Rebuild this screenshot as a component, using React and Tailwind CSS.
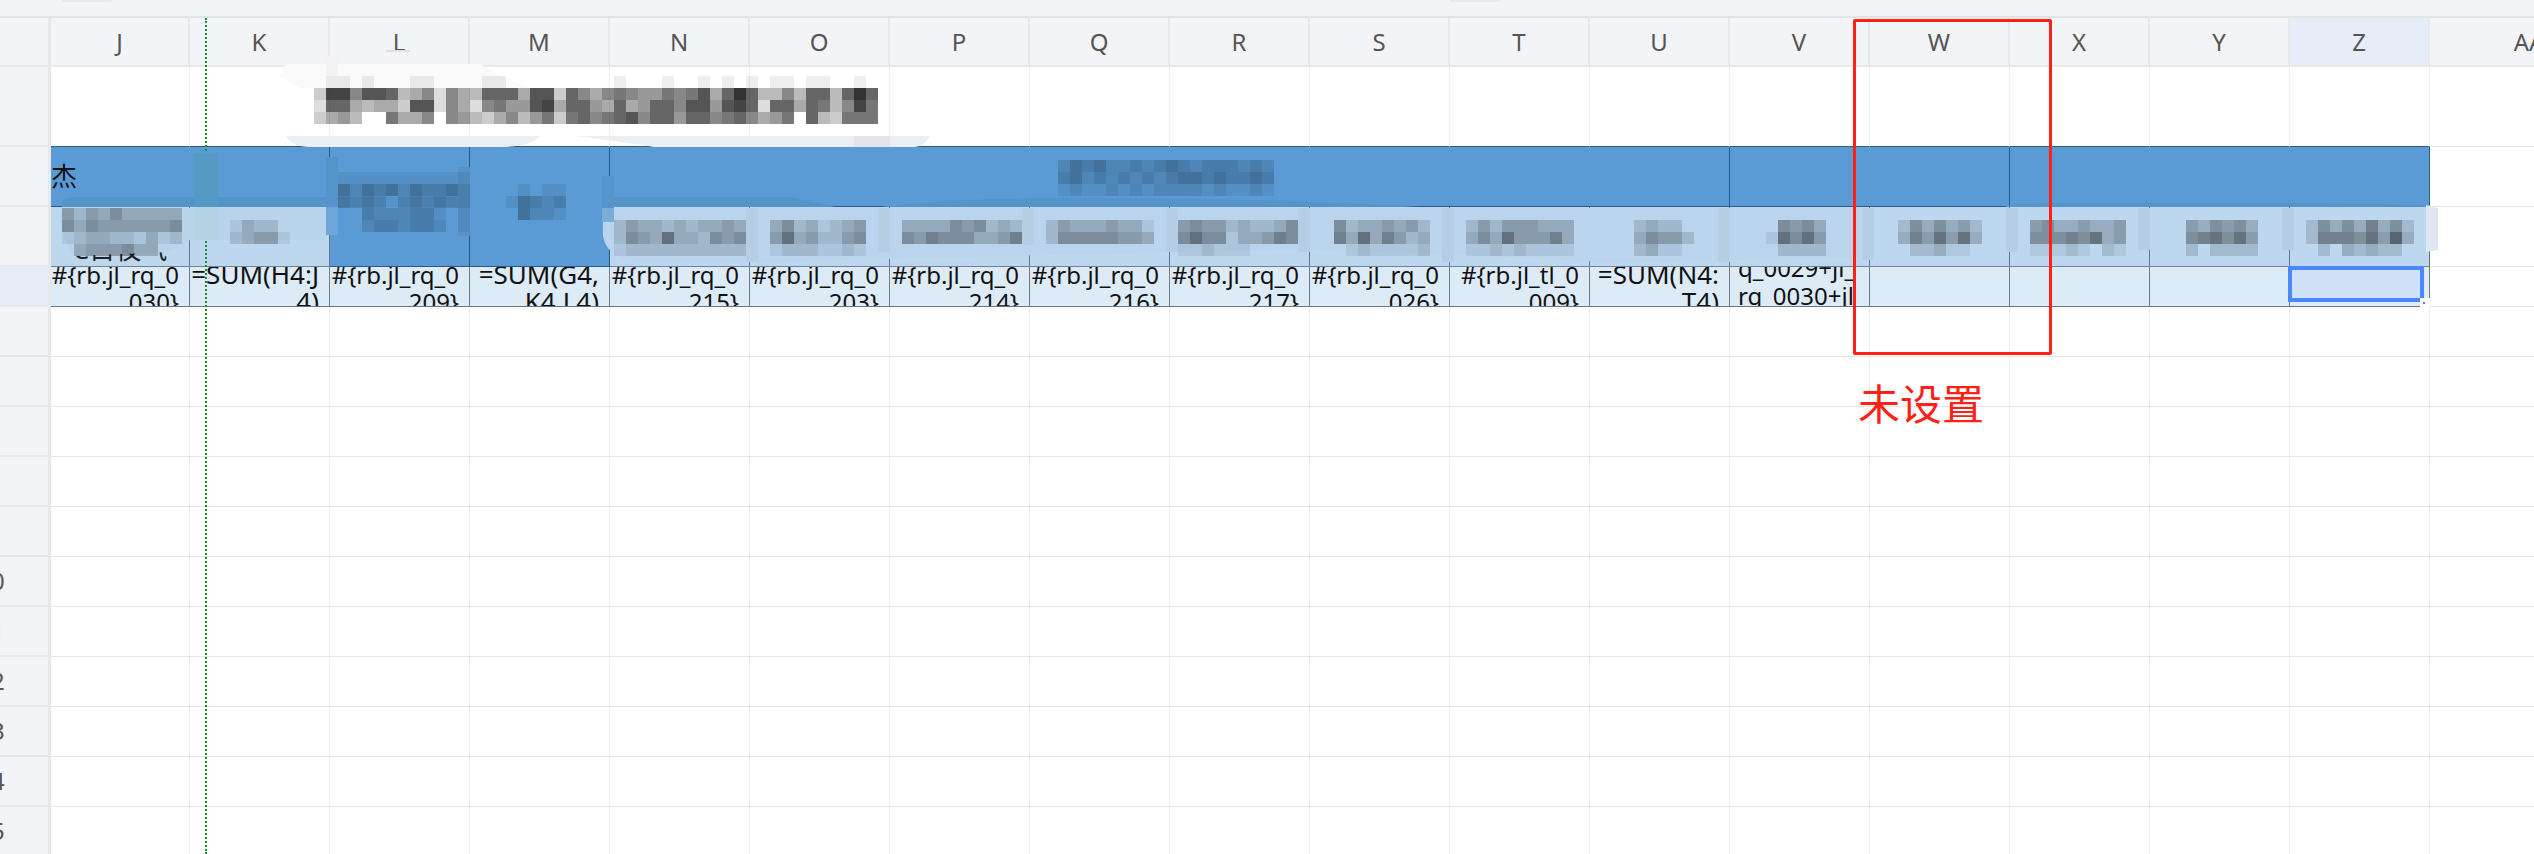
import React from 'react'

const COLS = ['J', 'K', 'L', 'M', 'N', 'O', 'P', 'Q', 'R', 'S', 'T', 'U', 'V', 'W', 'X', 'Y', 'Z']

const DATA = [
  ['#{rb.jl_rq_0', '030}'],
  ['=SUM(H4:J', '4)'],
  ['#{rb.jl_rq_0', '209}'],
  ['=SUM(G4,', 'K4,L4)'],
  ['#{rb.jl_rq_0', '215}'],
  ['#{rb.jl_rq_0', '203}'],
  ['#{rb.jl_rq_0', '214}'],
  ['#{rb.jl_rq_0', '216}'],
  ['#{rb.jl_rq_0', '217}'],
  ['#{rb.jl_rq_0', '026}'],
  ['#{rb.jl_tl_0', '009}'],
  ['=SUM(N4:', 'T4)'],
]

// Pixelated areas of the screenshot: one char per 12px block, f = untouched, 0 = black
const MOSAICS = [
  { x: 314, y: 76, rows: [
    'feefefffeeffffeeffffffff' + 'fefffeffefefefeefeeffef',
    'c448556ba8d8ab666a55c68a' + '878997875a636bb8b66b636',
    'd66abaac55d8ad879954a669' + 'a6a9668559546d66a67b847',
    'ca9bff7aa8f89bca8b97c768' + '7658669668768a97f6bc777',
  ] },
  { x: 1058, y: 160, rows: [
    'dbcbddcdcbcdcccdcd',
    'cbdcdcdcdcbbcbccbc',
    'edeedededdddedeede',
  ] },
  { x: 338, y: 172, rows: ['eeeeeeeeeee', 'bdbcbdbccbd', 'cdcdfdcdcdd', 'ffcdddccefe', 'ffdccdccdfe'] },
  { x: 506, y: 184, rows: ['fefee', 'ebcdc', 'fbdde'] },
  { x: 62, y: 208, rows: ['bdbcaccccc', 'acabbbbbba', 'edccddeced', 'fcbbbaccff'] },
  { x: 230, y: 220, rows: ['ecddf', 'dcbbe'] },
  { x: 614, y: 220, rows: ['dbccdcdccbc', 'dabc8ccdaba', 'edddddddddd'] },
  { x: 770, y: 220, rows: ['cadcedcb', 'b8cbddba', 'edddeede'] },
  { x: 902, y: 220, rows: ['ccccabadcd', 'ab9aaaccb9'] },
  { x: 1046, y: 220, rows: ['dbcccbcce', 'daaaaabbc'] },
  { x: 1178, y: 220, rows: ['babbdcddca', 'a8aaeccb9a', 'eedeeefff'] },
  { x: 1322, y: 220, rows: ['fadccbcbd', 'f9c8c9bdc', 'ffedeeeed'] },
  { x: 1466, y: 220, rows: ['dbdbbbccc', 'cac8bbb9c', 'eededeeee'] },
  { x: 1634, y: 220, rows: ['dcdd', 'cabbd', 'dcee'] },
  { x: 1766, y: 220, rows: ['fabac', 'e8a8b', 'fdddd'] },
  { x: 1898, y: 220, rows: ['dacacbd', 'c9b8b8c', 'fddceef'] },
  { x: 2030, y: 220, rows: ['baccbccb', 'aaa9a8cb', 'eeedefde'] },
  { x: 2186, y: 220, rows: ['bcabac', 'a98a8b', 'dfdddd'] },
  { x: 2306, y: 220, rows: ['dacac9cad', 'd999a8b7c', 'fdfcdcddf'] },
]

// Smudged retouching around the pixelated areas
function Redactions() {
  return (
    <svg className="absolute left-0 top-0 pointer-events-none" width="2534" height="854">
      {/* title smudge */}
      <path d="M278 76 L286 64 H480 L500 76 L530 88 H300 Z" fill="#fafafa" />
      <rect x="326" y="56" width="12" height="20" fill="#f3f3f5" />
      <rect x="386" y="50" width="24" height="2" fill="#e0e0e0" />
      <path d="M286 136 H540 Q530 147 500 147 H310 Q292 147 286 136 Z" fill="#eceff2" />
      <path d="M578 136 H662 L655 147 Z" fill="#eceff2" />
      <path d="M600 136 H930 Q924 147 915 147 H655 Z" fill="#eceff2" />
      <rect x="854" y="136" width="36" height="11" fill="#e2e4e8" />

      {/* darker band under the row 2 header */}
      <path d="M62 207 V202 Q64 197 80 197 H470 V207 Z" fill="#5594ca" />
      <path d="M614 197 H790 L835 207 H614 Z" fill="#5594ca" />
      <path d="M880 207 Q960 196 1150 198 Q1300 200 1420 207 Z" fill="#5594ca" />
      <path d="M2005 207 Q2010 204 2040 203 H2320 L2430 205 V207 Z" fill="#5594ca" />

      {/* light fill over row 3 lines */}
      <path d="M60 220 Q62 208 70 208 H326 V240 H190 L170 252 L75 256 Q62 240 60 220 Z" fill="#b9d3ea" />
      <path d="M606 208 H1860 V258 L1600 262 L1450 254 L1300 250 L1170 252 L760 262 H640 Q606 258 603 236 Q602 216 606 208 Z" fill="#b9d4ec" />
      <path d="M1870 208 H2430 V250 H1870 Z" fill="#bdd7ee" />

      {/* vertical streaks */}
      <rect x="194" y="153" width="24" height="54" fill="#559ac4" />
      <rect x="194" y="207" width="24" height="33" fill="#b3d2e3" />
      <rect x="326" y="157" width="12" height="50" fill="#5594ca" />
      <rect x="326" y="207" width="12" height="28" fill="#6ea6d7" />
      <rect x="458" y="167" width="12" height="69" fill="#5692c8" />
      <rect x="602" y="176" width="12" height="32" fill="#5593cb" />
      <rect x="602" y="208" width="12" height="14" fill="#7aadda" />
      {[[746, 262], [878, 252], [1022, 245], [1166, 252], [1298, 252], [1442, 262], [1718, 262], [1862, 260], [2006, 252], [2138, 250], [2282, 250]].map(([x, bottom]) => (
        <rect key={x} x={x} y="208" width="12" height={bottom - 208} fill="#b5cee4" />
      ))}
      <path d="M2426 205 L2438 208 V250 L2426 252 Z" fill="#e0e7f0" />

      {MOSAICS.map((m, i) => (
        <g key={i}>
          {m.rows.flatMap((row, r) => [...row].map((ch, c) => (
            ch === 'f' ? null : (
              <rect
                key={`${r}-${c}`}
                x={m.x + c * 12}
                y={m.y + r * 12}
                width="12"
                height="12"
                fill="#000"
                fillOpacity={1 - parseInt(ch, 16) / 15}
                shapeRendering="crispEdges"
              />
            )
          )))}
        </g>
      ))}
    </svg>
  )
}

function Gutter({ label, selected }) {
  return (
    <div className={`overflow-hidden border-r-[3px] border-b-2 border-[#e8e8e8] flex items-center ${selected ? 'bg-[#e7edf8]' : 'bg-[#f3f4f8]'}`}>
      {label && <span className="block w-[36px] -ml-[27px] shrink-0 text-center text-[#555]">{label}</span>}
    </div>
  )
}

function BlankRow({ label }) {
  return (
    <>
      <Gutter label={label} />
      {COLS.map(c => <div key={c} className="border-r border-b border-r-[#ececec] border-b-[#e5e5e5]" />)}
      <div className="border-b border-[#e5e5e5]" />
    </>
  )
}

export default function App() {
  return (
    <div className="relative w-[2534px] h-[854px] overflow-hidden bg-white text-[24px] font-['Noto_Sans','Noto_Sans_CJK_SC',sans-serif]">
      {/* toolbar remains */}
      <div className="h-[18px] bg-[#f3f4f6] border-b-2 border-[#e2e3e3] flex gap-[1338px] pl-[62px]">
        <div className="w-[50px] h-[2px] bg-[#e8e8e8] rounded-b" />
        <div className="w-[50px] h-[2px] bg-[#e8e8e8] rounded-b" />
      </div>

      {/* column letters */}
      <div className="flex h-[49px] bg-[#f3f4f8] border-b-2 border-[#e8e8e8] text-[#555]">
        <div className="w-[51px] shrink-0 border-r-[3px] border-[#e8e8e8]" />
        {COLS.map(c => (
          <div key={c} className={`${c === 'J' ? 'w-[139px]' : 'w-[140px]'} shrink-0 flex items-center justify-center border-r-2 border-[#e8e8e8] ${c === 'Z' ? 'bg-[#e7edf8]' : ''}`}>
            {c}
          </div>
        ))}
        <div className="w-[198px] shrink-0 flex items-center justify-center">AA</div>
      </div>

      <div className="grid grid-cols-[51px_139px_repeat(16,140px)_140px] grid-rows-[80px_60px_60px_40px_repeat(11,50px)]">
        {/* title row */}
        <Gutter />
        {COLS.map(c => <div key={c} className="border-r border-b border-r-[#f0f0f0] border-b-[#2c5a85]" />)}
        <div className="border-b border-[#e5e5e5]" />

        {/* merged header */}
        <Gutter />
        <div className="col-span-2 bg-[#5b9bd5] border-r border-b border-[#2c5a85] overflow-hidden pt-[11px] text-[26px] leading-[36px] text-[#111]">杰</div>
        <div className="row-span-2 bg-[#5b9bd5] border-r border-b border-[#2c5a85]" />
        <div className="row-span-2 bg-[#5b9bd5] border-r border-b border-[#2c5a85]" />
        <div className="col-span-8 bg-[#5b9bd5] border-r border-b border-[#2c5a85]" />
        <div className="col-span-2 bg-[#5b9bd5] border-r border-b border-[#2c5a85]" />
        <div className="col-span-3 bg-[#5b9bd5] border-r border-b border-[#2c5a85]" />
        <div className="border-b border-[#e5e5e5]" />

        {/* sub header */}
        <Gutter />
        <div className="bg-[#bdd7ee] border-r border-b border-r-[#5d7590] border-b-[#6f8193] overflow-hidden flex items-end justify-center text-[26px] leading-[28px] pb-[3px] text-[#222] whitespace-nowrap">C目夜气</div>
        <div className="bg-[#bdd7ee] border-r border-b border-r-[#5d7590] border-b-[#6f8193]" />
        {COLS.slice(4).map(c => <div key={c} className="bg-[#bdd7ee] border-r border-b border-r-[#5d7590] border-b-[#6f8193]" />)}
        <div className="border-b border-[#e5e5e5]" />

        {/* data row */}
        <Gutter selected />
        {DATA.map((lines, i) => (
          <div key={i} className={`bg-[#ddebf7] border-r border-b border-r-[#6f7d8c] border-b-[#6b7480] overflow-hidden flex flex-col justify-center pr-[10px] pt-[2px] text-right leading-[27px] text-[#111] whitespace-nowrap ${lines[0].startsWith('=') ? 'text-[26px]' : ''}`}>
            {lines.map(l => <div key={l}>{l}</div>)}
          </div>
        ))}
        <div className="bg-[#ddebf7] border-r border-b border-r-[#6f7d8c] border-b-[#6b7480] overflow-hidden flex flex-col justify-center pl-[8px] pb-[10px] leading-[28px] text-[#111] whitespace-nowrap">
          <div>q_0029+jl_</div>
          <div>rq_0030+jl</div>
        </div>
        {['W', 'X', 'Y', 'Z'].map(c => <div key={c} className="bg-[#ddebf7] border-r border-b border-r-[#6f7d8c] border-b-[#6b7480]" />)}
        <div className="border-b border-[#e5e5e5]" />

        {['', '', '', '', '', '10', '11', '12', '13', '14', '15'].map((label, i) => <BlankRow key={i} label={label} />)}
      </div>

      {/* frozen pane line */}
      <div className="absolute left-[205px] top-[18px] bottom-0 border-l-2 border-dotted border-[#0f8f30]" />

      <Redactions />

      {/* selected cell */}
      <div className="absolute left-[2288px] top-[266px] w-[136px] h-[36px] border-4 border-[#4a86ff] bg-[#cfe0f7]" />
      <div className="absolute left-[2420px] top-[298px] w-[10px] h-[9px] bg-white">
        <div className="ml-[3px] mt-[4px] w-[2px] h-[2px] bg-[#4a86ff]" />
      </div>

      {/* annotation */}
      <div className="absolute left-[1853px] top-[19px] w-[199px] h-[336px] border-[3px] border-[#ff2016] rounded-[2px]" />
      <div className="absolute left-[1858px] top-[381px] text-[42px] leading-[42px] text-[#ff2016] font-['Noto_Sans_CJK_SC',sans-serif]">未设置</div>
    </div>
  )
}
